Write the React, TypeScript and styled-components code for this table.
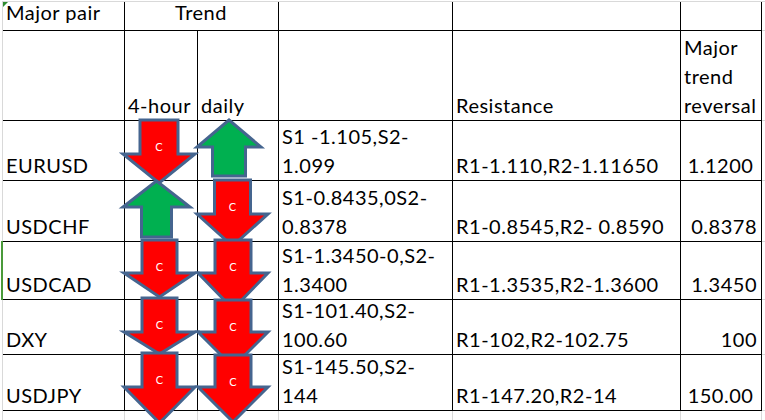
import React from 'react';
import styled, { createGlobalStyle } from 'styled-components';

const GlobalStyle = createGlobalStyle`
  html, body {
    margin: 0;
    padding: 0;
    background: #fff;
  }
  body {
    font-family: Lato, "Open Sans", sans-serif;
    color: #000;
  }
`;

type Align = 'left' | 'right' | 'center';

type ArrowSpec = {
  dir: 'up' | 'down';
  x: number;
  y: number;
  w: number;
  h: number;
  shaft: number;
  head: number;
  label?: boolean;
};

const rows = [
  { pair: 'EURUSD', support: ['S1 -1.105,S2-', '1.099'], resistance: 'R1-1.110,R2-1.11650', reversal: '1.1200', align: 'center' as Align },
  { pair: 'USDCHF', support: ['S1-0.8435,0S2-', '0.8378'], resistance: 'R1-0.8545,R2- 0.8590', reversal: '0.8378', align: 'right' as Align },
  { pair: 'USDCAD', support: ['S1-1.3450-0,S2-', '1.3400'], resistance: 'R1-1.3535,R2-1.3600', reversal: '1.3450', align: 'right' as Align, active: true },
  { pair: 'DXY', support: ['S1-101.40,S2-', '100.60'], resistance: 'R1-102,R2-102.75', reversal: '100', align: 'right' as Align },
  { pair: 'USDJPY', support: ['S1-145.50,S2-', '144'], resistance: 'R1-147.20,R2-14', reversal: '150.00', align: 'center' as Align },
];

const arrows: ArrowSpec[] = [
  { dir: 'down', x: 123, y: 120, w: 72, h: 63, shaft: 38, head: 29, label: true },
  { dir: 'up', x: 197, y: 120, w: 64, h: 56, shaft: 33, head: 27 },
  { dir: 'up', x: 123, y: 181, w: 67, h: 56, shaft: 30, head: 26 },
  { dir: 'down', x: 197, y: 180, w: 71, h: 66, shaft: 36, head: 32, label: true },
  { dir: 'down', x: 124, y: 240, w: 71, h: 57, shaft: 35, head: 24, label: true },
  { dir: 'down', x: 198, y: 240, w: 70, h: 69, shaft: 36, head: 36, label: true },
  { dir: 'down', x: 124, y: 298, w: 71, h: 56, shaft: 35, head: 22, label: true },
  { dir: 'down', x: 198, y: 300, w: 70, h: 67, shaft: 36, head: 35, label: true },
  { dir: 'down', x: 124, y: 353, w: 71, h: 70, shaft: 35, head: 36, label: true },
  { dir: 'down', x: 198, y: 355, w: 70, h: 67, shaft: 36, head: 35, label: true },
];

function Arrow({ dir, x, y, w, h, shaft, head, label }: ArrowSpec) {
  const s1 = (w - shaft) / 2;
  const s2 = s1 + shaft;
  const points =
    dir === 'down'
      ? `${s1},0 ${s2},0 ${s2},${h - head} ${w},${h - head} ${w / 2},${h} 0,${h - head} ${s1},${h - head}`
      : `${w / 2},0 ${w},${head} ${s2},${head} ${s2},${h} ${s1},${h} ${s1},${head} 0,${head}`;
  return (
    <ArrowSvg $x={x} $y={y} width={w} height={h} viewBox={`0 0 ${w} ${h}`}>
      <polygon
        points={points}
        fill={dir === 'down' ? '#ff0000' : '#00b050'}
        stroke="#45658f"
        strokeWidth={3}
      />
      {label && (
        <ArrowLabel x={w / 2} y={31} textAnchor="middle">
          C
        </ArrowLabel>
      )}
    </ArrowSvg>
  );
}

export default function App() {
  return (
    <>
      <GlobalStyle />
      <Sheet>
        <Grid>
          <Cell $pb={3} $flag>Major pair</Cell>
          <Cell $span={2} $align="center" $pb={3}>Trend</Cell>
          <Cell />
          <Cell />
          <Cell />
          <Gutter />

          <Cell />
          <Cell>4-hour</Cell>
          <Cell>daily</Cell>
          <Cell />
          <Cell>Resistance</Cell>
          <Cell>
            <Line>Major</Line>
            <Line>trend</Line>
            <Line>reversal</Line>
          </Cell>
          <Gutter />

          {rows.map((r) => (
            <React.Fragment key={r.pair}>
              <Cell $active={r.active}>{r.pair}</Cell>
              <Cell />
              <Cell />
              <Cell>
                {r.support.map((l) => (
                  <Line key={l}>{l}</Line>
                ))}
              </Cell>
              <Cell>{r.resistance}</Cell>
              <Cell $align={r.align}>{r.reversal}</Cell>
              <Gutter />
            </React.Fragment>
          ))}

          <Blank />
          <Blank />
          <Blank />
          <Blank />
          <Blank />
          <Blank />
          <Gutter />
        </Grid>

        <ArrowLayer>
          {arrows.map((a, i) => (
            <Arrow key={i} {...a} />
          ))}
        </ArrowLayer>
      </Sheet>
    </>
  );
}

const Sheet = styled.div`
  position: relative;
  width: 765px;
  height: 420px;
  overflow: hidden;
  box-sizing: border-box;
  padding: 1px 0 0 2px;
`;

const Grid = styled.div`
  display: grid;
  grid-template-columns: 122px 73px 81px 174px 228px 81px 3px;
  grid-template-rows: 29px 90px 60px 61px 58px 55px 56px 20px;
  border-left: 1px solid #d9d9d9;
  border-top: 1px solid #d9d9d9;
`;

const Cell = styled.div<{ $span?: number; $align?: Align; $pb?: number; $active?: boolean; $flag?: boolean }>`
  position: relative;
  grid-column: span ${(p) => p.$span ?? 1};
  box-sizing: border-box;
  display: flex;
  flex-direction: column;
  justify-content: flex-end;
  text-align: ${(p) => p.$align ?? 'left'};
  padding: 0 4px ${(p) => p.$pb ?? 0}px 3px;
  border-right: 1px solid #000;
  border-bottom: 1px solid #000;
  font-size: 20px;
  line-height: 29px;
  letter-spacing: 0.5px;
  white-space: nowrap;

  ${(p) =>
    p.$active &&
    `
    &::before {
      content: '';
      position: absolute;
      left: -2px;
      top: -1px;
      bottom: -1px;
      width: 2px;
      background: #4a9a3a;
    }
  `}

  ${(p) =>
    p.$flag &&
    `
    &::after {
      content: '';
      position: absolute;
      left: 0;
      top: 0;
      border-top: 5px solid #2e8b2e;
      border-right: 5px solid transparent;
    }
  `}
`;

const Line = styled.span`
  display: block;
`;

const Gutter = styled.div`
  border-bottom: 1px solid #d9d9d9;
`;

const Blank = styled.div`
  border-right: 1px solid #d9d9d9;
`;

const ArrowLayer = styled.div`
  position: absolute;
  inset: 0;
  pointer-events: none;
`;

const ArrowSvg = styled.svg<{ $x: number; $y: number }>`
  position: absolute;
  left: ${(p) => p.$x}px;
  top: ${(p) => p.$y}px;
  overflow: visible;
`;

const ArrowLabel = styled.text`
  fill: #fff;
  font-family: Lato, sans-serif;
  font-size: 11px;
`;
